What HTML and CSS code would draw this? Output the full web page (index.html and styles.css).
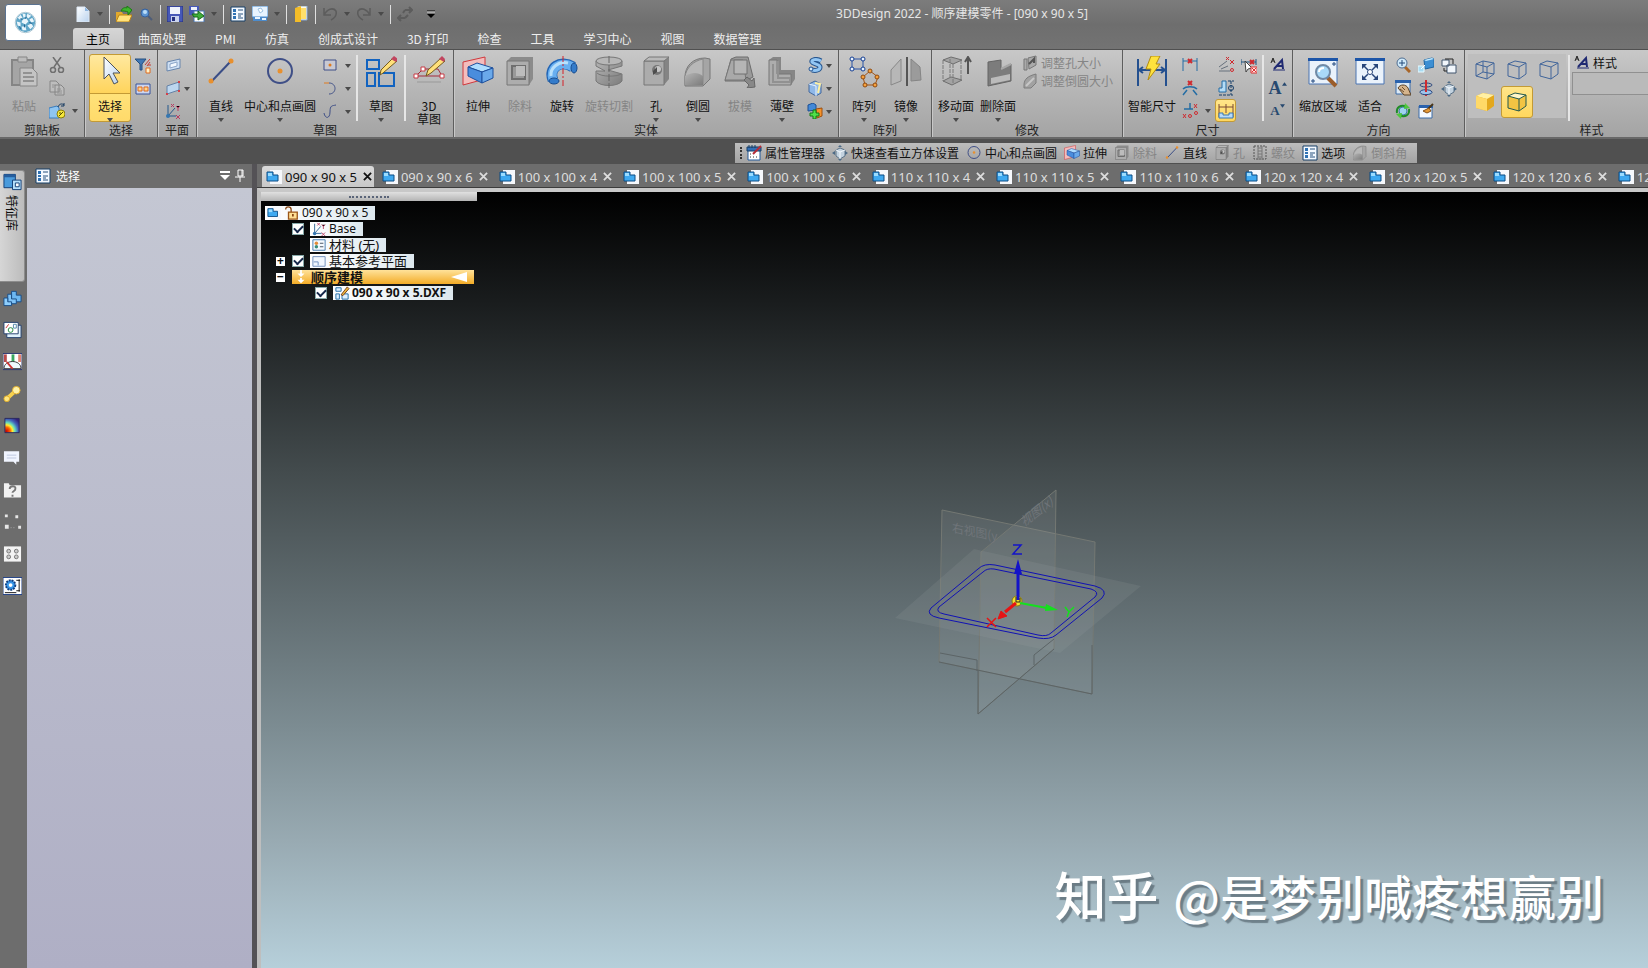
FILE: index.html
```html
<!DOCTYPE html>
<html lang="zh-CN">
<head>
    <meta charset="UTF-8">
    <meta name="viewport" content="width=device-width, initial-scale=1.0">
    <title>3DDesign 2022</title>
    <link rel="stylesheet" href="styles.css">
</head>
<body>

    <!-- icon sprite -->
    <svg class="sprite" aria-hidden="true">
        <defs>
            <linearGradient id="gBlue" x1="0" y1="0" x2="0" y2="1"><stop offset="0" stop-color="#c4e4ff"/><stop offset="1" stop-color="#2f7ac8"/></linearGradient>
            <linearGradient id="gGrey" x1="0" y1="0" x2="1" y2="1"><stop offset="0" stop-color="#b4b4b4"/><stop offset="1" stop-color="#7c7c7c"/></linearGradient>
            <linearGradient id="gPaper" x1="0" y1="0" x2="1" y2="1"><stop offset="0" stop-color="#ffffff"/><stop offset="1" stop-color="#b9d2ee"/></linearGradient>
            <radialGradient id="gHeat" cx="0.1" cy="0.9" r="1.1"><stop offset="0" stop-color="#c00"/><stop offset="0.25" stop-color="#f60"/><stop offset="0.4" stop-color="#fe3"/><stop offset="0.55" stop-color="#6db"/><stop offset="0.75" stop-color="#46b"/><stop offset="1" stop-color="#32207a"/></radialGradient>
        </defs>

        <symbol id="part" viewBox="0 0 16 16"><path d="M4 1h12v14H4z" fill="#f6f8fc"/><path d="M1 3h6v3h5v6H1z" fill="#3fa9f0" stroke="#0c4d85"/><path d="M2 4h4v3H2z" fill="#9cdcff"/></symbol>
        <symbol id="arrow" viewBox="0 0 6 4"><path d="M0 0h6L3 4z" fill="currentColor"/></symbol>
        <symbol id="logo" viewBox="0 0 36 36"><circle cx="20" cy="18" r="10" fill="#5fa6c8"/><circle cx="20" cy="18" r="10.500" fill="none" stroke="#a9c4d2"/><path d="M12 13l3-3 2 3-3 2zM17 9l3 0 0 3-2 1zM22 9l4 2-3 3-2-2zM27 13l2 4-3 1-2-3zM17 15l4-1 2 3-3 3-4-2zM11 17l4 1 0 4-3-1zM16 22l4 0 1 4-4 0zM22 21l4-2 2 3-3 3z" fill="#eaf5fb"/><path d="M15 14l2 1M21 12l-1 2M24 18l3 1M19 20v3M14 22l1 3" stroke="#1f5f8d"/></symbol>

        <!-- quick access -->
        <symbol id="new" viewBox="0 0 16 16"><path d="M2 1h8l4 4v11H2z" fill="url(#gPaper)" stroke="#dfe9f5"/><path d="M10 1l4 4h-4z" fill="#8eb4dd"/></symbol>
        <symbol id="open" viewBox="0 0 16 16"><path d="M0 6h6l1 2h6v7H0z" fill="#e2a92c"/><path d="M3 9h13l-3 7H0z" fill="#ffe27b" stroke="#b98317"/><path d="M5 5c1-3 4-4 6-3V0l5 4-4 5V6c-2-1-4-1-7-1z" fill="#3fb62c" stroke="#1d7a14"/></symbol>
        <symbol id="find" viewBox="0 0 16 16"><path d="M10 10l4 4" stroke="#4c5c78" stroke-width="2"/><circle cx="7" cy="7" r="4" fill="#5b94d2" stroke="#37619c"/><circle cx="7" cy="6" r="2" fill="#b9dcf8"/></symbol>
        <symbol id="save" viewBox="0 0 16 16"><path d="M0 0h16v16H0z" fill="#4658b8" stroke="#26307e"/><path d="M3 1h10v7H3z" fill="#eef2fb"/><path d="M4 10h8v6H4z" fill="#c9d3ee"/><path d="M5 11h3v4H5z" fill="#26307e"/></symbol>
        <symbol id="saveall" viewBox="0 0 16 16"><path d="M0 0h10v9H0z" fill="#4658b8"/><path d="M2 1h6v3H2z" fill="#eef2fb"/><path d="M5 5h10v11H5z" fill="#fff" stroke="#4b78b5"/><path d="M3 8h6V5l6 5-6 4v-3H5z" fill="#3fae3a" stroke="#17691b"/></symbol>
        <symbol id="list" viewBox="0 0 16 16"><path d="M1 1h14v14H1z" fill="#f4f9ff" stroke="#163e66"/><path d="M3 3h3v3H3zM3 7h3v2H3zM3 10h3v3H3z" fill="#2f72b4"/><path d="M8 4h5M8 8h5M8 12h5M8 10h3" stroke="#27517d"/></symbol>
        <symbol id="screen" viewBox="0 0 16 16"><path d="M0 0h16v11H0z" fill="#e8f4ff" stroke="#4d8ccc"/><path d="M6 3l3-1 2 3-3 2z" fill="#fff" stroke="#9cc2e2"/><path d="M1 11h14v4H1z" fill="#4d8ccc"/><path d="M3 12h5M10 13h4" stroke="#e8f4ff" stroke-width="2"/></symbol>
        <symbol id="door" viewBox="0 0 16 16"><path d="M5 0h9v14H5z" fill="#fffbe6" stroke="#8aa9d6"/><path d="M2 2l6-2v16H2z" fill="#f3bc28"/><path d="M8 2h5v11H8z" fill="#ffdf6b"/></symbol>
        <symbol id="undo" viewBox="0 0 16 16"><path d="M2 2v7h7M2 9c3-6 9-8 12-4 1 4-1 7-5 9" fill="none" stroke="currentColor" stroke-width="1.500"/></symbol>
        <symbol id="redo" viewBox="0 0 16 16"><path d="M14 2v7H7M14 9C11 3 5 1 2 5c-1 4 1 7 5 9" fill="none" stroke="currentColor" stroke-width="1.500"/></symbol>
        <symbol id="sync" viewBox="0 0 16 16"><path d="M8 4h6M12 1l3 3-3 3M8 12H2M4 9l-3 3 3 3M8 4L6 7M8 12l3-3" fill="none" stroke="currentColor" stroke-width="2"/></symbol>
        <symbol id="custom" viewBox="0 0 10 8"><path d="M1 1h8" stroke="#000"/><path d="M1 2h8" stroke="#ddd"/><path d="M1 4h8L5 8z" fill="#000"/></symbol>

        <!-- large ribbon icons -->
        <symbol id="paste" viewBox="0 0 32 32"><path d="M4 4h21v25H4z" fill="#a5a5a5" stroke="#858585" stroke-width="2"/><path d="M10 1h9v5h-9z" fill="#bcbcbc" stroke="#858585"/><path d="M12 12h12l5 5v13H12z" fill="#c4c4c4" stroke="#858585"/><path d="M15 17h9M15 21h11M15 25h11" stroke="#929292" stroke-width="2"/></symbol>
        <symbol id="pointer" viewBox="0 0 32 32"><path d="M10 1v22l5-5 5 10 4-2-5-9h7z" fill="url(#gPaper)" stroke="#4c525c"/></symbol>
        <symbol id="line" viewBox="0 0 32 32"><path d="M6 26L26 5" stroke="#3a4d86" stroke-width="2"/><circle cx="6" cy="25" r="2.500" fill="#e8902e"/><circle cx="26" cy="5" r="2.500" fill="#e8902e"/></symbol>
        <symbol id="circle" viewBox="0 0 32 32"><circle cx="16" cy="15" r="12" fill="none" stroke="#3f4f87" stroke-width="2"/><circle cx="16" cy="15" r="2.500" fill="#e8902e"/></symbol>
        <symbol id="sketch" viewBox="0 0 32 32"><path d="M2 4h12v9H2zM2 17h8v13H2zM14 17h15v13H14z" fill="none" stroke="#1263c0" stroke-width="2"/><path d="M18 17l-3 2 1-5L28 2l4 3z" fill="#ffe07a" stroke="#765c1e"/><path d="M26 3l3-3 4 3-2 3z" fill="#c1445f"/></symbol>
        <symbol id="sketch3d" viewBox="0 0 32 32"><path d="M3 20l7-7h15l4 7z" fill="none" stroke="#a42a3a"/><path d="M1 18h4v4H1zM27 18h4v4h-4zM8 11h4v4H8z" fill="#fff" stroke="#c73a44"/><path d="M18 17l-5 3 2-6L28 2l4 3z" fill="#ffe07a" stroke="#765c1e"/><path d="M26 3l3-3 3 3-1 3z" fill="#c1445f"/><path d="M4 26h24" stroke="#999"/></symbol>
        <symbol id="extrude" viewBox="0 0 32 32"><path d="M1 6l22-5v22L1 29z" fill="#f3bdbd" stroke="#d0383c"/><path d="M6 11l9-4 16 5-11 4z" fill="#aeddff" stroke="#1d4f9c"/><path d="M6 11l14 5v11L6 20z" fill="#4a8ddd" stroke="#1d4f9c"/><path d="M20 16l11-4v10l-11 5z" fill="#6aa9ea" stroke="#1d4f9c"/></symbol>
        <symbol id="cut" viewBox="0 0 32 32"><path d="M3 5l4-4h22v22l-4 6H3z" fill="#8b8b8b"/><path d="M3 5h22v24H3z" fill="#adadad" stroke="#777"/><path d="M8 10h13v13H8z" fill="#999" stroke="#6e6e6e" stroke-width="2"/><path d="M12 10h9v10h-9z" fill="#bcbcbc"/></symbol>
        <symbol id="revolve" viewBox="0 0 32 32"><path d="M7 24C2 12 14 3 27 11" fill="none" stroke="#2265b5" stroke-width="11"/><path d="M7 24C3 12 14 4 27 11" fill="none" stroke="#69aff0" stroke-width="9"/><path d="M5 20C4 12 12 5 22 7" fill="none" stroke="#b9e0fb" stroke-width="3"/><ellipse cx="28" cy="12" rx="3" ry="5" fill="#347bca" stroke="#174c8e"/><ellipse cx="8" cy="25" rx="5" ry="3" fill="#347bca" stroke="#174c8e"/><path d="M17 0v30" stroke="#d32028" stroke-dasharray="6 2 2 2"/></symbol>
        <symbol id="revcut" viewBox="0 0 32 32"><path d="M3 5v5l9 5-9 0v10c4 6 22 6 26 0v-7l-14-4 14-4V5z" fill="url(#gGrey)" stroke="#777"/><ellipse cx="16" cy="5" rx="13" ry="4" fill="#b7b7b7" stroke="#777"/><path d="M4 17c4 4 20 4 24 1" fill="none" stroke="#777"/><path d="M16 0v32" stroke="#666" stroke-dasharray="7 2"/></symbol>
        <symbol id="hole" viewBox="0 0 32 32"><path d="M4 5l5-4h20v22l-5 6H4z" fill="#848484"/><path d="M4 5h20v24H4z" fill="#acacac" stroke="#777"/><path d="M4 5l5-4h20l-5 4z" fill="#bababa" stroke="#777"/><circle cx="17" cy="14" r="5" fill="#777"/><circle cx="18" cy="13" r="3" fill="#c6c6c6"/><path d="M13 15l4-4v5l-4 3z" fill="#4d4d4d"/></symbol>
        <symbol id="round" viewBox="0 0 32 32"><path d="M3 21C3 10 11 2 23 2l5 1v20l-7 7H3z" fill="#a5a5a5" stroke="#777"/><path d="M3 21C4 12 11 5 21 3v26H3z" fill="#b8b8b8" stroke="#888"/><path d="M3 20c5-3 12-5 18 0v9H3z" fill="url(#gGrey)"/></symbol>
        <symbol id="draft" viewBox="0 0 32 32"><path d="M7 3l5-2h12l5 20-8 4H1z" fill="#9a9a9a" stroke="#6c6c6c"/><path d="M7 4h12l3 20H1z" fill="#a9a9a9" stroke="#777"/><path d="M10 4h13v14H10z" fill="#b5b5b5" stroke="#707070"/><path d="M20 24l3-3 5 4 2-3 1 9-8 1 2-3z" fill="#888" stroke="#666"/></symbol>
        <symbol id="thin" viewBox="0 0 32 32"><path d="M3 4l4-3h8v13h14v9l-4 6H3z" fill="#868686"/><path d="M3 4h8v14h14v11H3z" fill="#adadad" stroke="#777"/><path d="M7 8v18h17v-4H12V5" fill="none" stroke="#919191" stroke-width="2"/></symbol>
        <symbol id="pattern" viewBox="0 0 32 32"><path d="M4 3h11v10H4z" fill="none" stroke="#2c56a8"/><g fill="#e9f4ff" stroke="#143d91"><circle cx="4" cy="3" r="2"/><circle cx="15" cy="3" r="2"/><circle cx="4" cy="13" r="2"/><circle cx="15" cy="13" r="2"/></g><path d="M22 15l8 6-3 8H17l-2-8z" fill="none" stroke="#a35414"/><g fill="#f7a13b" stroke="#8d4a12"><circle cx="22" cy="15" r="2"/><circle cx="29" cy="21" r="2"/><circle cx="27" cy="29" r="2"/><circle cx="17" cy="29" r="2"/><circle cx="15" cy="21" r="2"/></g></symbol>
        <symbol id="mirror" viewBox="0 0 32 32"><path d="M1 14l10-11v22l-10 4z" fill="#b7b7b7" stroke="#888"/><path d="M21 3l9 8 1 13-10 1z" fill="#9b9b9b" stroke="#858585"/><path d="M17 1v29" stroke="#555" stroke-width="2"/></symbol>
        <symbol id="moveface" viewBox="0 0 32 32"><path d="M3 4l8-3 11 3-9 4zM3 25l8-4 11 3-10 5z" fill="#a3a3a3" stroke="#6e6e6e"/><path d="M3 4v21M21 4v20M13 8v20M10 3v18" stroke="#7a7a7a" stroke-dasharray="4 1"/><path d="M28 18V3M25 6l3-5 3 5" fill="none" stroke="#555" stroke-width="2"/></symbol>
        <symbol id="delface" viewBox="0 0 32 32"><path d="M6 6l13-2v9l10-5v17L6 30z" fill="#7c7c7c" stroke="#656565"/><path d="M9 22l19-4v6L9 28z" fill="#bbb"/><path d="M19 13l10-5" stroke="#a8a8a8" stroke-width="2"/></symbol>
        <symbol id="smartdim" viewBox="0 0 32 32"><path d="M2 3v27M30 3v27M2 14h28M7 11l-4 3 4 3M25 11l4 3-4 3" fill="none" stroke="#24508f" stroke-width="2"/><path d="M15 0h9l-4 8h4L12 24l3-11h-5z" fill="#ffe23d" stroke="#b38b10"/></symbol>
        <symbol id="zoomarea" viewBox="0 0 32 32"><path d="M2 3h28v25H2z" fill="#eaf2fb" stroke="#4a75b2"/><path d="M1 2h30v3H1z" fill="#1c55a8"/><path d="M4 25h4M6 23v4M25 8h4M27 6v4" stroke="#254a80"/><path d="M20 21l9 9" stroke="#9b5d2a" stroke-width="4"/><circle cx="16" cy="16" r="7" fill="#a9d9f8" stroke="#7089a5" stroke-width="2"/><path d="M12 16c0-3 2-4 5-4" fill="none" stroke="#fff" stroke-width="2"/></symbol>
        <symbol id="fit" viewBox="0 0 32 32"><path d="M2 3h28v25H2z" fill="#eaf2fb" stroke="#4a75b2"/><path d="M1 2h30v3H1z" fill="#1c55a8"/><path d="M9 9l14 14M23 9L9 23" stroke="#29467a" stroke-width="1.500" stroke-dasharray="7 6"/><path d="M8 13V8h5zM19 8h5v5zM24 19v5h-5zM13 24H8v-5z" fill="#29467a"/><circle cx="16" cy="16" r="2.500" fill="#fff" stroke="#29467a"/></symbol>

        <!-- small ribbon icons -->
        <symbol id="scissors" viewBox="0 0 16 16"><path d="M4 0l7 10M12 0L5 10" stroke="#6f6f6f" stroke-width="1.500"/><circle cx="4" cy="13" r="2.500" fill="none" stroke="#6f6f6f" stroke-width="1.500"/><circle cx="12" cy="13" r="2.500" fill="none" stroke="#6f6f6f" stroke-width="1.500"/></symbol>
        <symbol id="copy" viewBox="0 0 16 16"><path d="M1 1h6l3 3v8H1zM6 5h6l3 3v7H6z" fill="#bdbdbd" stroke="#868686"/><path d="M8 9h4M8 11h5M8 13h5M3 5h3M3 7h2" stroke="#929292"/></symbol>
        <symbol id="pasteLink" viewBox="0 0 16 16"><path d="M0 5l8-2 2 2v10H0z" fill="#8fc5f1" stroke="#397cbd"/><path d="M9 4c1-3 4-4 6-2M15 0v3h-3" stroke="#163a60" fill="none"/><circle cx="12" cy="11" r="4" fill="#f6e83c" stroke="#897d0d"/><path d="M10 13l4-4M10 10h2" stroke="#544a05"/></symbol>
        <symbol id="filter" viewBox="0 0 16 16"><path d="M0 1h11L7 6v6H5V6z" fill="#4078b5" stroke="#244e80"/><path d="M10 7l5-6M12 8l3-4M13 7h3" stroke="#c43c38"/><path d="M11 10h4v5h-4z" fill="#fff3c9" stroke="#df6a1e"/></symbol>
        <symbol id="boxes" viewBox="0 0 16 16"><path d="M1 3h14v10H1z" fill="#cdd6ee" stroke="#36539c"/><path d="M3 6h4v4H3zM9 6h4v4H9z" fill="#ffd489" stroke="#df6a1e"/></symbol>
        <symbol id="plane" viewBox="0 0 16 16"><path d="M2 5l13-3v9L2 14z" fill="#cfe0f4" stroke="#6885ac"/><path d="M5 7l7-2v4l-7 2z" fill="#f4f9ff" stroke="#8ba4c7"/></symbol>
        <symbol id="plane3" viewBox="0 0 16 16"><path d="M2 6l12-4v8L2 14z" fill="#bcd6ef" stroke="#6482a7"/><path d="M13 1h2v2h-2zM1 13h2v2H1zM13 10h2v2h-2z" fill="#d54048"/></symbol>
        <symbol id="axes" viewBox="0 0 16 16"><path d="M3 2v11h8M3 13L10 5" fill="none" stroke="#25598c"/><path d="M6 1l3 3M9 1L6 4M11 3l2 2 2-2M13 5v3M11 12l4 4M15 12l-4 4" stroke="#b83b61"/><circle cx="3" cy="13" r="2" fill="#3577b1"/></symbol>
        <symbol id="rect" viewBox="0 0 16 16"><path d="M2 3h12v10H2z" fill="#c9c9d2" stroke="#3f4f87"/><circle cx="8" cy="8" r="1.500" fill="#df7a1e"/></symbol>
        <symbol id="arc" viewBox="0 0 16 16"><path d="M7 3c8 0 8 11 0 11" fill="none" stroke="#3f4f87"/><path d="M2 3h5" stroke="#df7a1e"/></symbol>
        <symbol id="curve" viewBox="0 0 16 16"><path d="M2 10c1 6 6 6 6-1S10 3 14 2" fill="none" stroke="#3f4f87"/></symbol>
        <symbol id="sweep" viewBox="0 0 16 16"><path d="M14 4C9 1 4 3 5 5s8 2 8 5-4 4-8 3" fill="none" stroke="#27568f" stroke-width="5"/><path d="M14 4C9 1 4 3 5 5s8 2 8 5-4 4-8 3" fill="none" stroke="#92c6f4" stroke-width="3"/><circle cx="4" cy="12" r="2" fill="#cfe8fb" stroke="#1d4f90"/></symbol>
        <symbol id="wrap" viewBox="0 0 16 16"><path d="M2 4l6-3 6 3v9l-5 3-7-4z" fill="#8fb8e8" stroke="#44699c"/><path d="M2 4l7 2v10" fill="none" stroke="#e8f2ff"/><path d="M8 3l5 1-2 9" fill="none" stroke="#fff0a0" stroke-width="2"/></symbol>
        <symbol id="addbody" viewBox="0 0 16 16"><path d="M1 2l5-2 3 2v5l-8 1z" fill="#4389d8" stroke="#1c4f93"/><path d="M9 6l6-1v8l-5 2z" fill="#f4922b" stroke="#9e4f0d"/><path d="M6 7h3v3h3v3H9v3H6v-3H3v-3h3z" fill="#4fe04a" stroke="#157a15"/></symbol>
        <symbol id="resize" viewBox="0 0 16 16"><path d="M2 4h3v11H2zM6 3l8-2v9l-7 4z" fill="#aaa" stroke="#777"/><path d="M7 9l5-5v4" fill="none" stroke="#555" stroke-width="2"/></symbol>
        <symbol id="fillet" viewBox="0 0 16 16"><path d="M2 12C2 6 6 3 14 1v9l-5 5H2z" fill="#a1a1a1" stroke="#7d7d7d"/><path d="M4 13l8-8" stroke="#c7c7c7" stroke-width="2"/></symbol>
        <symbol id="dimH" viewBox="0 0 16 16"><path d="M1 1v13M15 1v13M1 4h14" stroke="#246da4"/><path d="M6 2l4 4M10 2L6 6" stroke="#cf2a2f" stroke-width="2"/></symbol>
        <symbol id="dimA" viewBox="0 0 16 16"><path d="M1 15l4-5M15 15l-4-5M1 9c3-3 11-3 14 0" fill="none" stroke="#246da4" stroke-width="1.500"/><path d="M6 1l4 4M10 1L6 5" stroke="#cf2a2f" stroke-width="2"/></symbol>
        <symbol id="dimC" viewBox="0 0 16 16"><path d="M8 0v6H2M8 6h3" fill="none" stroke="#246da4" stroke-width="1.500"/><path d="M12 1l3 4M15 1l-3 4M1 11l3 4M4 11l-3 4" stroke="#cf2a2f"/><circle cx="8" cy="13" r="1.500" fill="none" stroke="#cf2a2f"/><circle cx="14" cy="10" r="1.500" fill="none" stroke="#cf2a2f"/></symbol>
        <symbol id="dimS" viewBox="0 0 16 16"><path d="M1 14h11M1 10l8-6M3 12l7-3" stroke="#66707c"/><path d="M8 0l3 3M11 0L8 3M12 3l4 4M16 3l-4 4" stroke="#cf2a2f"/><circle cx="14" cy="13" r="1.500" fill="none" stroke="#cf2a2f"/></symbol>
        <symbol id="dimD" viewBox="0 0 16 16"><path d="M1 12V8h3V1h4v11z" fill="#b4dcf6" stroke="#246da4"/><path d="M10 1h6M13 1v14M1 15h14" stroke="#173f69" stroke-dasharray="3 1"/><circle cx="13" cy="8" r="2.500" fill="none" stroke="#173f69"/></symbol>
        <symbol id="dimM" viewBox="0 0 16 16"><path d="M1 1v13M8 1v9M15 1v13M1 4h14" stroke="#7a4a35"/><path d="M1 10h4v2h6v-2h4v5H1z" fill="#b6daf8" stroke="#3976b3"/></symbol>
        <symbol id="dimP" viewBox="0 0 16 16"><path d="M0 1v6M15 1v6M0 4h15" stroke="#1f5280"/><path d="M9 2l4 4M13 2L9 6" stroke="#cf2a2f" stroke-width="2"/><path d="M4 3l7 7-4 1-2 3z" fill="#fff" stroke="#444"/><path d="M10 9h6v6h-6zM11 10l4 4M15 10l-4 4" fill="#ffe3e3" stroke="#d33"/></symbol>
        <symbol id="zoom" viewBox="0 0 16 16"><path d="M10 10l5 5" stroke="#a86528" stroke-width="3"/><circle cx="7" cy="6" r="5" fill="#cfe9fa" stroke="#4f6d90"/><path d="M4 6h6M7 3v6" stroke="#234a7b"/></symbol>
        <symbol id="viewcube" viewBox="0 0 16 16"><path d="M6 3l8-2 2 1v8l-9 2z" fill="#3d8fd3" stroke="#1e64a0"/><path d="M6 3l8-2 2 1-8 2z" fill="#bfe9ff"/><path d="M0 9h6v6H0z" fill="#a8dcf3" stroke="#e8faff"/><path d="M3 12l4-4" stroke="#fff"/></symbol>
        <symbol id="windows" viewBox="0 0 16 16"><path d="M1 2h7v6H1zM6 7h9v8H6z" fill="#f1f6fb" stroke="#43566e"/><path d="M4 1h8v5M3 10v3h3" fill="none" stroke="#222"/></symbol>
        <symbol id="pan" viewBox="0 0 16 16"><path d="M1 1h14v13H1z" fill="#dce9f5" stroke="#3c6ca8"/><path d="M0 0h16v3H0z" fill="#2a62ad"/><path d="M3 8c2-4 8-4 10 0l3 7H9z" fill="#d5b48c" stroke="#5b4227"/><path d="M5 9l4 3M7 7l3 3" stroke="#6b4c2b"/></symbol>
        <symbol id="spin" viewBox="0 0 16 16"><path d="M8 0v16" stroke="#cf2a2f" stroke-width="2"/><ellipse cx="8" cy="5" rx="6" ry="2" fill="none" stroke="#27447c"/><path d="M2 12c0 4 13 3 12 0-1-3-12-3-12 0z" fill="#9fc3ea" stroke="#27447c"/><path d="M8 0v12" stroke="#cf2a2f" stroke-width="2"/></symbol>
        <symbol id="cubearrows" viewBox="0 0 16 16"><path d="M4 5l4-2 5 2v6l-5 3-4-3z" fill="#c3d2df" stroke="#5b7287"/><path d="M4 5l4 2 5-2M8 7v7" fill="none" stroke="#f3f8fc"/><path d="M6 2l2-2 2 2zM0 8l3-2v4zM16 8l-3-2v4zM6 14l2 2 2-2z" fill="#4c6a86"/></symbol>
        <symbol id="refresh" viewBox="0 0 16 16"><circle cx="8" cy="8" r="4" fill="#9fd3ef" stroke="#3b7fa8"/><path d="M2 10C1 4 6 1 12 4M14 6c1 6-4 9-10 6" fill="none" stroke="#1e8c27" stroke-width="2"/><path d="M10 0l5 5-6 1zM6 16l-5-5 6-1z" fill="#4ec83e"/></symbol>
        <symbol id="brush" viewBox="0 0 16 16"><path d="M1 3h13v12H1z" fill="#f4f9ff" stroke="#3c6ca8"/><path d="M1 2h14v3H1z" fill="#2a62ad"/><path d="M15 1l-5 5" stroke="#4b3719" stroke-width="2"/><path d="M11 5L5 8l4 2 4-2z" fill="#e79a35" stroke="#84501a"/></symbol>
        <symbol id="cubeWire" viewBox="0 0 20 20"><path d="M1 4l7-3 11 2v11l-7 5-11-3zM1 4l11 3 7-4M12 7v12M8 1v11l-7 4M8 12l11 2" fill="none" stroke="#41659a"/></symbol>
        <symbol id="cubeEdge" viewBox="0 0 20 20"><path d="M1 4l7-3 11 2v11l-7 5-11-3zM1 4l11 3 7-4M12 7v12" fill="none" stroke="#41659a"/></symbol>
        <symbol id="cubeGold" viewBox="0 0 20 20"><path d="M1 4l7-3 11 2v11l-7 5-11-3z" fill="#e3a81e"/><path d="M1 4l7-3 11 2-7 4z" fill="#fff0a4"/><path d="M1 4l11 3v12L1 16z" fill="#ffd968"/></symbol>
        <symbol id="cubeGoldEdge" viewBox="0 0 20 20"><path d="M1 4l7-3 11 2v11l-7 5-11-3z" fill="#f3c443"/><path d="M1 4l7-3 11 2-7 4z" fill="#fff6c8"/><path d="M1 4l7-3 11 2v11l-7 5-11-3zM1 4l11 3 7-4M12 7v12" fill="none" stroke="#23594f"/></symbol>

        <!-- floating toolbar, tree and rail -->
        <symbol id="props" viewBox="0 0 16 16"><path d="M2 5h12v10H2z" fill="#fff" stroke="#225a9b"/><path d="M1 2h14v4H1zM3 0v3M6 0v3M9 0v3" fill="#326eb5" stroke="#163e66"/><path d="M4 12h1M7 12h1M10 12h1M4 9h1" stroke="#333"/><path d="M15 1l-8 8" stroke="#b52c37" stroke-width="2"/></symbol>
        <symbol id="thread" viewBox="0 0 16 16"><path d="M2 1h12v13H2z" fill="none" stroke="#555" stroke-dasharray="2 1"/><path d="M6 1v14M10 1v14M6 3h4M6 6h4M6 9h4M6 12h4" stroke="#777"/></symbol>
        <symbol id="lock" viewBox="0 0 16 16"><path d="M1 4c-1-4 6-4 6 0v4" fill="none" stroke="#894713" stroke-width="1.500"/><path d="M4 7h10v8H4z" fill="#ffdf94" stroke="#9a5518" stroke-width="1.500"/><path d="M9 9v3" stroke="#894713" stroke-width="2"/></symbol>
        <symbol id="material" viewBox="0 0 16 16"><path d="M1 2h14v12H1z" fill="#f5faff" stroke="#3871a9"/><circle cx="5" cy="6" r="2" fill="#e28b39"/><circle cx="5" cy="10" r="2" fill="#3a8d7c"/><path d="M9 6h4M9 10h4" stroke="#345"/></symbol>
        <symbol id="planes" viewBox="0 0 16 16"><path d="M1 3h14v11H1z" fill="#f1f7fe" stroke="#6587b7"/><path d="M2 9h5v4" fill="none" stroke="#6587b7"/></symbol>
        <symbol id="ordered" viewBox="0 0 10 16"><path d="M5 0v6M5 9v4" stroke="#fff" stroke-width="2"/><path d="M1 4h8L5 8zM1 11h8l-4 4z" fill="#fff"/></symbol>
        <symbol id="flag" viewBox="0 0 16 10"><path d="M0 5l16-5v10z" fill="#fff"/></symbol>
        <symbol id="minisketch" viewBox="0 0 16 16"><path d="M1 2h6v4H1zM1 9h4v6H1zM8 9h7v6H8z" fill="#dff0ff" stroke="#1263a0"/><path d="M7 10l7-9 2 2-7 8z" fill="#f0b93c" stroke="#6b3316"/></symbol>
        <symbol id="library" viewBox="0 0 20 18"><path d="M1 1h12v14H1z" fill="#4a9bdc" stroke="#133e76"/><path d="M1 1h12v3H1z" fill="#255d9d"/><path d="M10 7h9v10h-9z" fill="#b6e0fb" stroke="#133e76"/><path d="M13 10h4v4h-4z" fill="#fff" stroke="#133e76"/></symbol>
        <symbol id="family" viewBox="0 0 20 18"><path d="M9 2h5v4h5v7H9z" fill="#6db8f2" stroke="#184d87"/><path d="M5 5h4v5h5v5H5z" fill="#7fc3f7" stroke="#184d87"/><path d="M1 9h4v4h4v4H1z" fill="#8dcdfb" stroke="#184d87"/></symbol>
        <symbol id="cards" viewBox="0 0 20 18"><path d="M4 4h15v13H4z" fill="#dff0fa" stroke="#24406e"/><path d="M1 1h15v12H1z" fill="#fff" stroke="#24406e"/><path d="M3 7l3-4" stroke="#c33"/><circle cx="8" cy="9" r="2.500" fill="none" stroke="#258b42"/><path d="M11 3h3v4h-3z" fill="none" stroke="#58a"/></symbol>
        <symbol id="gauge" viewBox="0 0 20 18"><path d="M0 0h20v17H0z" fill="#fff" stroke="#24306e"/><path d="M1 1h3v8H1z" fill="#b84b4b"/><path d="M9 1h3v8H9z" fill="#3aa860"/><path d="M16 1h3v8h-3z" fill="#e38372"/><path d="M1 16C1 6 19 6 19 16z" fill="#eefaff" stroke="#333"/><path d="M4 9l6 7" stroke="#c33" stroke-width="2"/></symbol>
        <symbol id="bone" viewBox="0 0 20 18"><path d="M4 14L14 5" stroke="#f8d24e" stroke-width="4"/><circle cx="14" cy="5" r="4" fill="#fff2a8" stroke="#e1ae28"/><circle cx="4" cy="14" r="3" fill="#ffe680" stroke="#e1ae28"/></symbol>
        <symbol id="heat" viewBox="0 0 20 18"><path d="M2 1h15v15H2z" fill="url(#gHeat)" stroke="#292961"/></symbol>
        <symbol id="note" viewBox="0 0 20 18"><path d="M1 2h16v11h-3v3l-3-3H1z" fill="#f1f5ff"/><path d="M4 6h10M4 9h10" stroke="#bcc6dd"/></symbol>
        <symbol id="folder" viewBox="0 0 20 18"><path d="M1 2h5l1 2h12v13H1z" fill="#f1f1f1"/><path d="M7 8c0-4 7-4 6 0 0 2-3 2-3 4M10 14v2" fill="none" stroke="#777" stroke-width="2"/></symbol>
        <symbol id="dots" viewBox="0 0 20 18"><path d="M2 1h3v3H2zM13 2h3v3h-3zM2 12h4v4H2zM16 13h3v3h-3z" fill="#e6e6e6"/><path d="M8 15h5" stroke="#aaa" stroke-dasharray="1 2"/></symbol>
        <symbol id="holes" viewBox="0 0 20 18"><path d="M1 1h18v16H1z" fill="#f4f4f4"/><g fill="#ccc" stroke="#777"><circle cx="6" cy="6" r="2"/><circle cx="14" cy="6" r="2"/><circle cx="6" cy="12" r="2"/><circle cx="14" cy="12" r="2"/></g></symbol>
        <symbol id="gear" viewBox="0 0 20 18"><path d="M0 0h20v18H0z" fill="#fff" stroke="#183a83"/><circle cx="8" cy="8" r="5" fill="#3695e8" stroke="#123e80" stroke-width="2" stroke-dasharray="2 1"/><circle cx="8" cy="8" r="2" fill="#fff"/><path d="M17 2v13M14 3h4M14 14h4M2 16h12" stroke="#111"/></symbol>
        <symbol id="pin" viewBox="0 0 10 14"><path d="M3 1h5v6H3zM0 8h10M5 8v5M7 1v6" fill="none" stroke="#fff"/></symbol>
        <symbol id="menu" viewBox="0 0 10 10"><path d="M0 1h10" stroke="#fff" stroke-width="2"/><path d="M0 4h10L5 9z" fill="#fff"/></symbol>
        <symbol id="close" viewBox="0 0 10 10"><path d="M1 1l8 8M9 1L1 9" stroke="currentColor" stroke-width="2"/></symbol>
        <symbol id="fontAA" viewBox="0 0 16 16"><path d="M1 6l2-5 2 5M2 4h2" fill="none" stroke="#222"/><path d="M4 12L12 3l1 9M7 9h6" fill="none" stroke="#202a72" stroke-width="2"/><path d="M3 13h12" stroke="#202a72"/></symbol>
    </svg>

    <header class="titlebar">
        <button class="app-button" aria-label="应用程序"><svg><use href="#logo"/></svg></button>
        <div class="title-row">
            <div class="quick-access">
                <button aria-label="新建"><svg><use href="#new"/></svg></button>
                <svg class="caret"><use href="#arrow"/></svg>
                <span class="sep"></span>
                <button aria-label="打开"><svg><use href="#open"/></svg></button>
                <button aria-label="查找"><svg><use href="#find"/></svg></button>
                <span class="sep"></span>
                <button aria-label="保存"><svg><use href="#save"/></svg></button>
                <button aria-label="另存为"><svg><use href="#saveall"/></svg></button>
                <svg class="caret"><use href="#arrow"/></svg>
                <span class="sep"></span>
                <button aria-label="选项"><svg><use href="#list"/></svg></button>
                <button aria-label="屏幕"><svg><use href="#screen"/></svg></button>
                <svg class="caret"><use href="#arrow"/></svg>
                <span class="sep"></span>
                <button aria-label="退出"><svg><use href="#door"/></svg></button>
                <span class="sep"></span>
                <button aria-label="撤销" disabled><svg><use href="#undo"/></svg></button>
                <svg class="caret"><use href="#arrow"/></svg>
                <button aria-label="重做" disabled><svg><use href="#redo"/></svg></button>
                <svg class="caret"><use href="#arrow"/></svg>
                <span class="sep"></span>
                <button aria-label="更新" disabled><svg><use href="#sync"/></svg></button>
                <button class="customize" aria-label="自定义"><svg><use href="#custom"/></svg></button>
            </div>
            <h1>3DDesign 2022 - 顺序建模零件 - [090 x 90 x 5]</h1>
        </div>
        <nav class="ribbon-tabs">
            <a href="#" class="active">主页</a>
            <a href="#">曲面处理</a>
            <a href="#">PMI</a>
            <a href="#">仿真</a>
            <a href="#">创成式设计</a>
            <a href="#">3D 打印</a>
            <a href="#">检查</a>
            <a href="#">工具</a>
            <a href="#">学习中心</a>
            <a href="#">视图</a>
            <a href="#">数据管理</a>
        </nav>
    </header>

    <div class="ribbon">
        <section class="group">
            <div class="group-body">
                <button class="big" disabled><svg><use href="#paste"/></svg><span>粘贴</span></button>
                <div class="stack">
                    <button disabled aria-label="剪切"><svg><use href="#scissors"/></svg></button>
                    <button disabled aria-label="复制"><svg><use href="#copy"/></svg></button>
                    <button aria-label="粘贴链接"><svg><use href="#pasteLink"/></svg></button>
                </div>
                <div class="stack carets"><i></i><i></i><svg class="caret"><use href="#arrow"/></svg></div>
            </div>
            <h2>剪贴板</h2>
        </section>

        <section class="group">
            <div class="group-body">
                <button class="big selected"><svg><use href="#pointer"/></svg><span>选择</span><svg class="caret"><use href="#arrow"/></svg></button>
                <div class="stack">
                    <button aria-label="过滤器"><svg><use href="#filter"/></svg></button>
                    <button aria-label="选择框"><svg><use href="#boxes"/></svg></button>
                </div>
            </div>
            <h2>选择</h2>
        </section>

        <section class="group">
            <div class="group-body">
                <div class="stack">
                    <button aria-label="重合平面"><svg><use href="#plane"/></svg></button>
                    <button aria-label="三点平面"><svg><use href="#plane3"/></svg></button>
                    <button aria-label="坐标系"><svg><use href="#axes"/></svg></button>
                </div>
                <div class="stack carets narrow"><i></i><svg class="caret"><use href="#arrow"/></svg><i></i></div>
            </div>
            <h2>平面</h2>
        </section>

        <section class="group">
            <div class="group-body">
                <button class="big"><svg><use href="#line"/></svg><span>直线</span><svg class="caret"><use href="#arrow"/></svg></button>
                <button class="big"><svg><use href="#circle"/></svg><span>中心和点画圆</span><svg class="caret"><use href="#arrow"/></svg></button>
                <div class="stack">
                    <button aria-label="矩形"><svg><use href="#rect"/></svg></button>
                    <button aria-label="圆弧"><svg><use href="#arc"/></svg></button>
                    <button aria-label="曲线"><svg><use href="#curve"/></svg></button>
                </div>
                <div class="stack carets">
                    <svg class="caret"><use href="#arrow"/></svg>
                    <svg class="caret"><use href="#arrow"/></svg>
                    <svg class="caret"><use href="#arrow"/></svg>
                </div>
                <span class="divider"></span>
                <button class="big"><svg><use href="#sketch"/></svg><span>草图</span><svg class="caret"><use href="#arrow"/></svg></button>
                <span class="divider"></span>
                <button class="big two-line"><svg><use href="#sketch3d"/></svg><span>3D<br>草图</span></button>
            </div>
            <h2>草图</h2>
        </section>

        <section class="group">
            <div class="group-body">
                <button class="big"><svg><use href="#extrude"/></svg><span>拉伸</span></button>
                <button class="big" disabled><svg><use href="#cut"/></svg><span>除料</span></button>
                <button class="big"><svg><use href="#revolve"/></svg><span>旋转</span></button>
                <button class="big" disabled><svg><use href="#revcut"/></svg><span>旋转切割</span></button>
                <button class="big"><svg><use href="#hole"/></svg><span>孔</span><svg class="caret"><use href="#arrow"/></svg></button>
                <button class="big"><svg><use href="#round"/></svg><span>倒圆</span><svg class="caret"><use href="#arrow"/></svg></button>
                <button class="big" disabled><svg><use href="#draft"/></svg><span>拔模</span></button>
                <button class="big"><svg><use href="#thin"/></svg><span>薄壁</span><svg class="caret"><use href="#arrow"/></svg></button>
                <div class="stack">
                    <button aria-label="扫掠"><svg><use href="#sweep"/></svg></button>
                    <button aria-label="缠绕"><svg><use href="#wrap"/></svg></button>
                    <button aria-label="添加体"><svg><use href="#addbody"/></svg></button>
                </div>
                <div class="stack carets narrow">
                    <svg class="caret"><use href="#arrow"/></svg>
                    <svg class="caret"><use href="#arrow"/></svg>
                    <svg class="caret"><use href="#arrow"/></svg>
                </div>
            </div>
            <h2>实体</h2>
        </section>

        <section class="group roomy">
            <div class="group-body">
                <button class="big"><svg><use href="#pattern"/></svg><span>阵列</span><svg class="caret"><use href="#arrow"/></svg></button>
                <button class="big"><svg><use href="#mirror"/></svg><span>镜像</span><svg class="caret"><use href="#arrow"/></svg></button>
            </div>
            <h2>阵列</h2>
        </section>

        <section class="group modify">
            <div class="group-body">
                <button class="big"><svg><use href="#moveface"/></svg><span>移动面</span><svg class="caret"><use href="#arrow"/></svg></button>
                <button class="big"><svg><use href="#delface"/></svg><span>删除面</span><svg class="caret"><use href="#arrow"/></svg></button>
                <div class="labelled">
                    <button disabled><svg><use href="#resize"/></svg>调整孔大小</button>
                    <button disabled><svg><use href="#fillet"/></svg>调整倒圆大小</button>
                </div>
            </div>
            <h2>修改</h2>
        </section>

        <section class="group">
            <div class="group-body">
                <button class="big"><svg><use href="#smartdim"/></svg><span>智能尺寸</span></button>
                <div class="stack">
                    <button aria-label="间距"><svg><use href="#dimH"/></svg></button>
                    <button aria-label="夹角"><svg><use href="#dimA"/></svg></button>
                    <button aria-label="坐标尺寸"><svg><use href="#dimC"/></svg></button>
                </div>
                <div class="stack carets"><i></i><i></i><svg class="caret"><use href="#arrow"/></svg></div>
                <div class="stack">
                    <button aria-label="角坐标尺寸"><svg><use href="#dimS"/></svg></button>
                    <button aria-label="对称直径"><svg><use href="#dimD"/></svg></button>
                    <button class="selected" aria-label="保持对齐"><svg><use href="#dimM"/></svg></button>
                </div>
                <div class="stack">
                    <button aria-label="移除对齐"><svg><use href="#dimP"/></svg></button>
                </div>
                <span class="divider"></span>
                <div class="stack letters">
                    <button aria-label="尺寸样式"><svg><use href="#fontAA"/></svg></button>
                    <button aria-label="增大字体"><b>A</b><svg class="caret up"><use href="#arrow"/></svg></button>
                    <button class="smaller" aria-label="减小字体"><b>A</b><svg class="caret"><use href="#arrow"/></svg></button>
                </div>
            </div>
            <h2>尺寸</h2>
        </section>

        <section class="group roomy">
            <div class="group-body">
                <button class="big"><svg><use href="#zoomarea"/></svg><span>缩放区域</span></button>
                <button class="big"><svg><use href="#fit"/></svg><span>适合</span></button>
                <div class="stack">
                    <button aria-label="缩放"><svg><use href="#zoom"/></svg></button>
                    <button aria-label="平移"><svg><use href="#pan"/></svg></button>
                    <button aria-label="刷新"><svg><use href="#refresh"/></svg></button>
                </div>
                <div class="stack">
                    <button aria-label="视图方向"><svg><use href="#viewcube"/></svg></button>
                    <button aria-label="旋转"><svg><use href="#spin"/></svg></button>
                    <button aria-label="草图视图"><svg><use href="#brush"/></svg></button>
                </div>
                <div class="stack">
                    <button aria-label="上一视图"><svg><use href="#windows"/></svg></button>
                    <button aria-label="快速查看立方体"><svg><use href="#cubearrows"/></svg></button>
                </div>
            </div>
            <h2>方向</h2>
        </section>

        <section class="group style-group">
            <div class="group-body">
                <div class="gallery">
                    <button aria-label="线框"><svg><use href="#cubeWire"/></svg></button>
                    <button aria-label="可见和隐藏边"><svg><use href="#cubeEdge"/></svg></button>
                    <button aria-label="可见边"><svg><use href="#cubeEdge"/></svg></button>
                    <button aria-label="带阴影"><svg><use href="#cubeGold"/></svg></button>
                    <button class="selected" aria-label="带可见边的阴影"><svg><use href="#cubeGoldEdge"/></svg></button>
                </div>
                <span class="divider"></span>
                <div class="style-box">
                    <label for="viewStyle"><svg><use href="#fontAA"/></svg>样式</label>
                    <select id="viewStyle"></select>
                </div>
            </div>
            <h2>样式</h2>
        </section>
    </div>

    <div class="toolbar-row">
        <div class="toolbar">
            <button><svg><use href="#props"/></svg>属性管理器</button>
            <button><svg><use href="#cubearrows"/></svg>快速查看立方体设置</button>
            <button><svg><use href="#circle"/></svg>中心和点画圆</button>
            <button><svg><use href="#extrude"/></svg>拉伸</button>
            <button disabled><svg><use href="#cut"/></svg>除料</button>
            <button><svg><use href="#line"/></svg>直线</button>
            <button disabled><svg><use href="#hole"/></svg>孔</button>
            <button disabled><svg><use href="#thread"/></svg>螺纹</button>
            <button><svg><use href="#list"/></svg>选项</button>
            <button disabled><svg><use href="#round"/></svg>倒斜角</button>
        </div>
    </div>

    <div class="workspace">
        <nav class="rail">
            <button class="rail-tab"><svg><use href="#library"/></svg><span>特征库</span></button>
            <button aria-label="零件族"><svg><use href="#family"/></svg></button>
            <button aria-label="图层"><svg><use href="#cards"/></svg></button>
            <button aria-label="传感器"><svg><use href="#gauge"/></svg></button>
            <button aria-label="工程参考"><svg><use href="#bone"/></svg></button>
            <button aria-label="仿真"><svg><use href="#heat"/></svg></button>
            <button aria-label="讨论"><svg><use href="#note"/></svg></button>
            <button aria-label="帮助"><svg><use href="#folder"/></svg></button>
            <button aria-label="点"><svg><use href="#dots"/></svg></button>
            <button aria-label="孔"><svg><use href="#holes"/></svg></button>
            <button aria-label="设置"><svg><use href="#gear"/></svg></button>
        </nav>

        <aside class="panel">
            <div class="panel-header">
                <svg class="panel-icon"><use href="#list"/></svg>
                <h2>选择</h2>
                <button aria-label="菜单"><svg class="menu"><use href="#menu"/></svg></button>
                <button aria-label="固定"><svg class="pin"><use href="#pin"/></svg></button>
            </div>
            <div class="panel-body"></div>
        </aside>

        <main class="document">
            <div class="doc-tabs">
                <div class="doc-tab active"><svg><use href="#part"/></svg><a href="#">090 x 90 x 5</a><button aria-label="关闭"><svg><use href="#close"/></svg></button></div>
                <div class="doc-tab"><svg><use href="#part"/></svg><a href="#">090 x 90 x 6</a><button aria-label="关闭"><svg><use href="#close"/></svg></button></div>
                <div class="doc-tab"><svg><use href="#part"/></svg><a href="#">100 x 100 x 4</a><button aria-label="关闭"><svg><use href="#close"/></svg></button></div>
                <div class="doc-tab"><svg><use href="#part"/></svg><a href="#">100 x 100 x 5</a><button aria-label="关闭"><svg><use href="#close"/></svg></button></div>
                <div class="doc-tab"><svg><use href="#part"/></svg><a href="#">100 x 100 x 6</a><button aria-label="关闭"><svg><use href="#close"/></svg></button></div>
                <div class="doc-tab"><svg><use href="#part"/></svg><a href="#">110 x 110 x 4</a><button aria-label="关闭"><svg><use href="#close"/></svg></button></div>
                <div class="doc-tab"><svg><use href="#part"/></svg><a href="#">110 x 110 x 5</a><button aria-label="关闭"><svg><use href="#close"/></svg></button></div>
                <div class="doc-tab"><svg><use href="#part"/></svg><a href="#">110 x 110 x 6</a><button aria-label="关闭"><svg><use href="#close"/></svg></button></div>
                <div class="doc-tab"><svg><use href="#part"/></svg><a href="#">120 x 120 x 4</a><button aria-label="关闭"><svg><use href="#close"/></svg></button></div>
                <div class="doc-tab"><svg><use href="#part"/></svg><a href="#">120 x 120 x 5</a><button aria-label="关闭"><svg><use href="#close"/></svg></button></div>
                <div class="doc-tab"><svg><use href="#part"/></svg><a href="#">120 x 120 x 6</a><button aria-label="关闭"><svg><use href="#close"/></svg></button></div>
                <div class="doc-tab"><svg><use href="#part"/></svg><a href="#">120 x 120 x 8</a></div>
            </div>

            <div class="viewport">
                <div class="tree">
                    <div class="tree-grip"></div>
                    <ul>
                        <li class="root"><span class="node"><svg><use href="#part"/></svg><svg><use href="#lock"/></svg>090 x 90 x 5</span></li>
                        <li><input type="checkbox" id="base" checked><label class="node" for="base"><svg><use href="#axes"/></svg>Base</label></li>
                        <li class="no-check"><span class="node cjk"><svg><use href="#material"/></svg>材料 (无)</span></li>
                        <li class="expandable"><button aria-label="展开">+</button><input type="checkbox" id="planesCheck" checked><label class="node cjk" for="planesCheck"><svg><use href="#planes"/></svg>基本参考平面</label></li>
                        <li class="expandable"><button aria-label="折叠">−</button><span class="node cjk ordered"><svg><use href="#ordered"/></svg><b>顺序建模</b><svg class="flag"><use href="#flag"/></svg></span></li>
                        <li class="child"><input type="checkbox" id="dxf" checked><label class="node strong" for="dxf"><svg><use href="#minisketch"/></svg>090 x 90 x 5.DXF</label></li>
                    </ul>
                </div>

                <svg class="model" viewBox="0 0 280 260">
                    <g fill="#a0a8a8" fill-opacity="0.14" stroke="#747873">
                        <path d="M62 40L215 72l-3 152L59 192z"/>
                        <path d="M176 20l-2 159-76 65 3-162z"/>
                        <path d="M94 79l167 37-81 67L15 148z" stroke="none"/>
                        <path d="M60 183l37 7v11M154 195v-10l20-16" fill="none" stroke="#5c6466"/>
                        <path d="M59 192l153 32M98 244l76-65M98 200v44M212 175v49" fill="none" stroke="#5c6466"/>
                    </g>
                    <text class="plane-name" transform="translate(72 62) rotate(11) skewX(11)">右视图(y</text>
                    <text class="plane-name" transform="translate(144 57) rotate(-38) skewX(-20)">视图(x)</text>
                    <g fill="none" stroke="#1111b4">
                        <path d="M115 95l100 21q14 4 7 12l-46 37q-6 5-18 3L59 148q-14-3-8-10l47-39q6-6 17-4z"/>
                        <path d="M114 99l97 20q9 3 4 8l-44 36q-4 4-13 2L64 144q-9-2-5-7l44-35q4-4 11-3z"/>
                    </g>
                    <circle cx="137" cy="131" r="5" fill="#f2df30" stroke="#897d0d"/>
                    <path d="M138 130V102" stroke="#1414c8" stroke-width="3"/><path d="M138 89l4 15h-8z" fill="#1414c8"/>
                    <path d="M140 133l27 5" stroke="#14e01e" stroke-width="2"/><path d="M178 140l-13 1 1-7z" fill="#14e01e"/>
                    <path d="M136 133l-11 9" stroke="#e61414" stroke-width="3"/><path d="M118 149l3-8 6 5z" fill="#e61414" stroke="#e61414"/>
                    <path d="M136 127v5h4v-4" fill="none" stroke="#222"/>
                    <path d="M133 75h8l-8 9h9" fill="none" stroke="#1414c8" stroke-width="1.500"/>
                    <path d="M185 137l4 5 5-5M189 142l-2 5" fill="none" stroke="#14e01e" stroke-width="1.500"/>
                    <path d="M107 148l9 9M116 148l-9 9" fill="none" stroke="#e61414" stroke-width="1.500"/>
                </svg>

                <p class="watermark"><b>知乎</b> @是梦别喊疼想赢别</p>
            </div>
        </main>
    </div>

</body>
</html>
```

FILE: styles.css
```css
* {
    box-sizing: border-box;
}

body {
    margin: 0;
    height: 100vh;
    display: flex;
    flex-direction: column;
    overflow: hidden;
    background-color: #505050;
    font-family: "Noto Sans CJK SC", sans-serif;
    font-size: 12px;
    line-height: 14px;
    color: #111;
}

h1, h2, p, ul {
    margin: 0;
    padding: 0;
    font-size: 12px;
    font-weight: normal;
}

button {
    padding: 0;
    border: none;
    background: none;
    font: inherit;
    color: inherit;
    white-space: nowrap;
}

a {
    color: inherit;
    text-decoration: none;
}

svg {
    display: block;
    flex: none;
    width: 16px;
    height: 16px;
}

.sprite {
    position: absolute;
    width: 0;
    height: 0;
}

.caret {
    width: 6px;
    height: 4px;
    color: #4a4a4a;
}

/* title bar */
.titlebar {
    display: grid;
    grid-template-columns: 73px 1fr;
    grid-template-rows: 28px 21px;
    background: linear-gradient(#7c7c7c, #6e6e6e 50%, #737373);
    border-bottom: 1px solid #505050;
}

.app-button {
    grid-row: 1 / 3;
    width: 37px;
    height: 37px;
    margin: 4px 0 0 5px;
    background-color: #fff;
    border: 1px solid #5b7391;
    border-radius: 3px;
}

.app-button svg {
    width: 35px;
    height: 35px;
}

.title-row {
    display: flex;
    align-items: center;
    padding-right: 160px;
}

.title-row h1 {
    flex: 1;
    text-align: center;
    color: #e6e6e6;
    font-family: "Noto Sans", "Noto Sans CJK SC", sans-serif;
}

.quick-access {
    display: flex;
    align-items: center;
    gap: 6px;
    padding-left: 2px;
}

.quick-access button:disabled {
    color: #5c5c5c;
}

.quick-access .sep {
    width: 1px;
    height: 19px;
    background-color: #e0e0e0;
}

.quick-access .customize {
    margin-left: 7px;
}

.customize svg {
    width: 10px;
    height: 8px;
}

.ribbon-tabs {
    display: flex;
}

.ribbon-tabs a {
    padding: 4px 15px 0 14px;
    color: #eee;
}

.ribbon-tabs .active {
    padding: 4px 14px 0 13px;
    color: #000;
    background: linear-gradient(#d6d6d6, #c6c6c6);
    border-radius: 3px 3px 0 0;
}

/* ribbon */
.ribbon {
    display: flex;
    height: 89px;
    flex: none;
    overflow: hidden;
    background: linear-gradient(#c8c8c8, #b6b6b6 45%, #a4a4a4);
    border-bottom: 2px solid #686868;
}

.group {
    display: flex;
    flex-direction: column;
    flex: none;
    padding: 4px 3px 0;
    border-right: 1px solid #5e5e5e;
    box-shadow: 1px 0 #c8c8c8;
}

.group.roomy {
    padding: 4px 4px 0;
}

.group h2 {
    text-align: center;
    line-height: 16px;
    color: #222;
}

.group-body {
    display: flex;
    height: 68px;
}

.big {
    display: flex;
    flex-direction: column;
    align-items: center;
    min-width: 42px;
    height: 68px;
    padding: 2px 2px 0;
}

.big svg {
    width: 32px;
    height: 32px;
}

.big span {
    margin-top: 11px;
}

.big .caret {
    width: 6px;
    height: 4px;
    margin-top: 5px;
}

.big.two-line span {
    line-height: 13px;
}

button:disabled {
    color: #858585;
}

.selected {
    background: linear-gradient(#ffe58a, #ffd75e);
    border: 1px solid #c39a35;
    border-radius: 3px;
}

.big.selected {
    background: linear-gradient(#ffe9a0, #ffd45c 57%, #c39a35 57%, #c39a35 59%, #ffe27a 59%, #ffda6a);
    padding: 1px 1px 0;
    margin-left: 1px;
}

.stack {
    display: flex;
    flex-direction: column;
    padding: 0 3px;
}

.stack button {
    display: flex;
    align-items: center;
    justify-content: center;
    width: 17px;
    height: 23px;
}

.stack .selected {
    width: 21px;
    margin: 0 -2px;
}

.stack.carets {
    width: 13px;
    padding: 0 0 0 4px;
}

.stack.carets.narrow {
    width: 9px;
    padding: 0;
}

.carets .caret, .carets i {
    height: 4px;
    margin: 10px 0 9px;
}

.divider {
    width: 2px;
    height: 66px;
    margin: 1px 2px;
    background-color: #e6e6e6;
}

.labelled {
    padding-left: 3px;
}

.labelled button {
    display: flex;
    align-items: center;
    gap: 3px;
    height: 18px;
}

.modify .group-body {
    padding-right: 6px;
}

.letters {
    font-family: "Liberation Serif", serif;
    color: #27496f;
}

.letters b {
    font-size: 18px;
}

.letters .caret {
    width: 5px;
    margin-bottom: 9px;
    color: #27496f;
}

.letters .up {
    transform: rotate(180deg);
}

.letters .smaller b {
    font-size: 13px;
}

.gallery {
    display: grid;
    grid-template-columns: repeat(3, 32px);
    grid-template-rows: repeat(2, 32px);
    height: 64px;
    padding: 0 1px;
    background-color: #bebebe;
}

.gallery button {
    display: flex;
    align-items: center;
    justify-content: center;
}

.gallery svg {
    width: 20px;
    height: 20px;
}

.style-group {
    width: 254px;
}

.style-box {
    flex: 1;
}

.style-box label {
    display: flex;
    align-items: center;
    gap: 3px;
    height: 18px;
    padding-left: 2px;
}

.style-box select {
    display: block;
    appearance: none;
    width: 100%;
    height: 23px;
    background-color: #bababa;
    border: 1px solid #909090;
}

/* floating toolbar */
.toolbar-row {
    flex: none;
    display: flex;
    height: 25px;
    padding: 4px 0 1px 735px;
}

.toolbar {
    display: flex;
    align-items: center;
    gap: 7px;
    padding: 0 10px 0 4px;
    background: linear-gradient(#bdbdbd, #a3a3a3);
}

.toolbar::before {
    content: "";
    height: 12px;
    margin: 0 -3px 0 1px;
    border-left: 2px dotted #333;
}

.toolbar button {
    display: flex;
    align-items: center;
    gap: 3px;
}

/* workspace */
.workspace {
    flex: 1;
    display: flex;
    min-height: 0;
    background-color: #6d6d6d;
}

.rail {
    width: 27px;
    padding-top: 6px;
}

.rail svg {
    width: 19px;
    height: 18px;
}

.rail button {
    display: block;
    height: 32px;
    padding-left: 3px;
}

.rail .rail-tab {
    display: flex;
    flex-direction: column;
    align-items: center;
    gap: 4px;
    width: 25px;
    height: 112px;
    padding: 2px 0 0;
    border: 1px solid #8c8c8c;
    border-left: none;
    border-radius: 0 3px 3px 0;
    background: linear-gradient(90deg, #d6d6d6, #bcbcbc);
}

.rail-tab span {
    writing-mode: vertical-rl;
    text-orientation: sideways;
}

.panel {
    display: flex;
    flex-direction: column;
    width: 225px;
}

.panel-header {
    display: flex;
    align-items: center;
    gap: 5px;
    height: 24px;
    padding: 0 7px 0 8px;
    color: #fff;
}

.panel-header h2 {
    flex: 1;
}

.panel-header .menu {
    width: 10px;
    height: 10px;
}

.panel-header .pin {
    width: 10px;
    height: 14px;
}

.panel-body {
    flex: 1;
    background: linear-gradient(#c4c7d3, #afafc5);
}

.document {
    flex: 1;
    display: flex;
    flex-direction: column;
    min-width: 0;
    border-left: 5px solid #545256;
}

.doc-tabs {
    display: flex;
    height: 24px;
    padding: 2px 0 0 5px;
    overflow: hidden;
    border-bottom: 1px solid #3c3c3c;
}

.doc-tab {
    display: flex;
    flex: none;
    align-items: center;
    gap: 3px;
    padding: 0 3px 0 8px;
    color: #ddd;
    font-family: "Noto Sans", sans-serif;
    font-size: 13px;
    white-space: nowrap;
}

.doc-tab button {
    padding-left: 3px;
}

.doc-tab button svg {
    width: 9px;
    height: 9px;
}

.doc-tab.active {
    padding: 0 2px 0 4px;
    color: #111;
    background: linear-gradient(#dadada, #c8c8c8);
    border-radius: 3px 3px 0 0;
}

.viewport {
    flex: 1;
    position: relative;
    overflow: hidden;
    border-top: 4px solid #c8c8c8;
    border-left: 4px solid #bebebe;
    background: linear-gradient(#000, #191c1d 14%, #434b4d 36%, #7c8c92 69%, #99abb3 84%, #b6cfda) padding-box;
}

/* feature tree */
.tree {
    width: 216px;
    font-family: "Noto Sans", "Noto Sans CJK SC", sans-serif;
    font-size: 11px;
}

.tree-grip {
    height: 9px;
    display: flex;
    align-items: center;
    justify-content: center;
    background: linear-gradient(#e0e0e0, #b4b4b4);
}

.tree-grip::before {
    content: "";
    width: 40px;
    border-top: 2px dotted #5a6478;
}

.tree ul {
    padding: 4px 3px 0 4px;
    list-style: none;
}

.tree li {
    display: flex;
    align-items: center;
    height: 16px;
    padding-left: 27px;
}

.tree li.root {
    padding-left: 0;
}

.tree li.no-check {
    padding-left: 45px;
}

.tree li.expandable {
    padding-left: 11px;
}

.tree li.child {
    padding-left: 50px;
}

.tree input {
    appearance: none;
    width: 12px;
    height: 12px;
    margin: 0 6px 0 0;
    display: flex;
    align-items: center;
    justify-content: center;
    background-color: #fff;
    border: 1px solid #8aa;
}

.tree input:checked::before {
    content: "";
    width: 7px;
    height: 4px;
    margin-bottom: 2px;
    border-left: 2px solid #16284a;
    border-bottom: 2px solid #16284a;
    transform: rotate(-45deg);
}

.tree li button {
    width: 9px;
    height: 9px;
    margin-right: 7px;
    background-color: #fff;
    line-height: 8px;
    font-weight: bold;
}

.node {
    display: flex;
    align-items: center;
    gap: 2px;
    height: 14px;
    padding: 0 7px 0 1px;
    background: linear-gradient(90deg, #fff, #dde8ee);
    white-space: nowrap;
}

.node.cjk {
    font-size: 13px;
}

.node.strong {
    font-size: 12px;
    font-weight: bold;
}

.node svg {
    height: 14px;
}

.node.ordered {
    flex: 1;
    background: linear-gradient(#ffe29a, #f3ac27);
}

.ordered .flag {
    margin-left: auto;
    height: 10px;
}

/* 3D view */
.model {
    position: absolute;
    left: 619px;
    top: 278px;
    width: 280px;
    height: 260px;
}

.plane-name {
    font-size: 12px;
    fill: #70757a;
}

.watermark {
    position: absolute;
    right: 44px;
    bottom: 43px;
    font-size: 48px;
    line-height: 60px;
    font-weight: 500;
    color: #fff;
    text-shadow: 3px 3px 1px rgba(70, 85, 95, 0.6);
}

.watermark b {
    margin-right: 4px;
    font-size: 52px;
    font-weight: 500;
}
```
